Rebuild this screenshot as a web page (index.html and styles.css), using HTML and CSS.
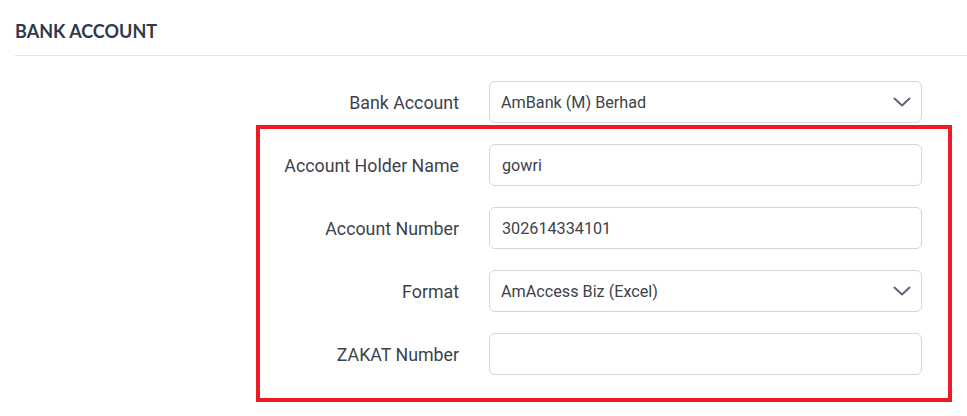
FILE: index.html
```html
<!DOCTYPE html>
<html lang="en">
  <head>
    <meta charset="UTF-8" />
    <meta name="viewport" content="width=device-width,initial-scale=1.0" />
    <title>Bank Account</title>
    <link rel="stylesheet" href="styles.css">
  </head>
  <body>
    <section class="panel">
      <h2 class="panel-title">BANK ACCOUNT</h2>
      <form class="bank-form">
        <div class="form-row">
          <label for="bank">Bank Account</label>
          <div class="select-wrap">
            <select id="bank" name="bank">
              <option>AmBank (M) Berhad</option>
            </select>
            <svg class="chevron" width="18" height="10" viewBox="0 0 18 10">
              <path d="M1.5 1.5 L9 8.5 L16.5 1.5" fill="none" stroke="#5f6673" stroke-width="2" stroke-linecap="round" stroke-linejoin="round"/>
            </svg>
          </div>
        </div>
        <div class="highlight-group">
          <div class="form-row">
            <label for="holder">Account Holder Name</label>
            <input type="text" id="holder" name="holder" value="gowri" />
          </div>
          <div class="form-row">
            <label for="accNo">Account Number</label>
            <input type="text" id="accNo" name="accNo" value="302614334101" />
          </div>
          <div class="form-row">
            <label for="format">Format</label>
            <div class="select-wrap">
              <select id="format" name="format">
                <option>AmAccess Biz (Excel)</option>
              </select>
              <svg class="chevron" width="18" height="10" viewBox="0 0 18 10">
                <path d="M1.5 1.5 L9 8.5 L16.5 1.5" fill="none" stroke="#5f6673" stroke-width="2" stroke-linecap="round" stroke-linejoin="round"/>
              </svg>
            </div>
          </div>
          <div class="form-row">
            <label for="zakat">ZAKAT Number</label>
            <input type="text" id="zakat" name="zakat" value="" />
          </div>
        </div>
      </form>
    </section>
  </body>
</html>
```

FILE: styles.css
```css
* {
  margin: 0;
  padding: 0;
  box-sizing: border-box;
}
html, body {
  background: #fff;
  font-family: Roboto, "Liberation Sans", sans-serif;
  color: #3d424b;
}
.panel {
  padding: 0 0 14px 15px;
}
.panel-title {
  font-family: Lato, "Liberation Sans", sans-serif;
  font-weight: 700;
  font-size: 18px;
  line-height: 22px;
  color: #2e3a4d;
  padding: 20px 0 13px;
  border-bottom: 1px solid #e2e2e2;
}
.bank-form {
  display: flex;
  flex-direction: column;
  align-items: flex-start;
  gap: 21px;
  margin-top: 25px;
}
.highlight-group {
  position: relative;
  display: flex;
  flex-direction: column;
  gap: 21px;
  padding-bottom: 27px;
}
/* red outline drawn around the account detail fields */
.highlight-group::before {
  content: "";
  position: absolute;
  top: -19px;
  bottom: 0;
  left: 241px;
  right: -30px;
  border: 4px solid #ed1c24;
  pointer-events: none;
}
.form-row {
  display: flex;
  align-items: center;
  gap: 30px;
}
.form-row label {
  width: 444px;
  text-align: right;
  font-size: 17.8px;
  color: #3d424b;
}
input[type="text"],
select {
  width: 433px;
  height: 42px;
  padding: 0 12px;
  border: 1px solid #d3d5db;
  border-radius: 6px;
  background: #fff;
  font-family: Roboto, "Liberation Sans", sans-serif;
  font-size: 16.2px;
  color: #3d424b;
  outline: none;
}
select {
  appearance: none;
  -webkit-appearance: none;
  padding-left: 11px;
}
.select-wrap {
  position: relative;
  width: 433px;
}
.select-wrap .chevron {
  position: absolute;
  right: 11px;
  top: 16px;
  pointer-events: none;
}
```
